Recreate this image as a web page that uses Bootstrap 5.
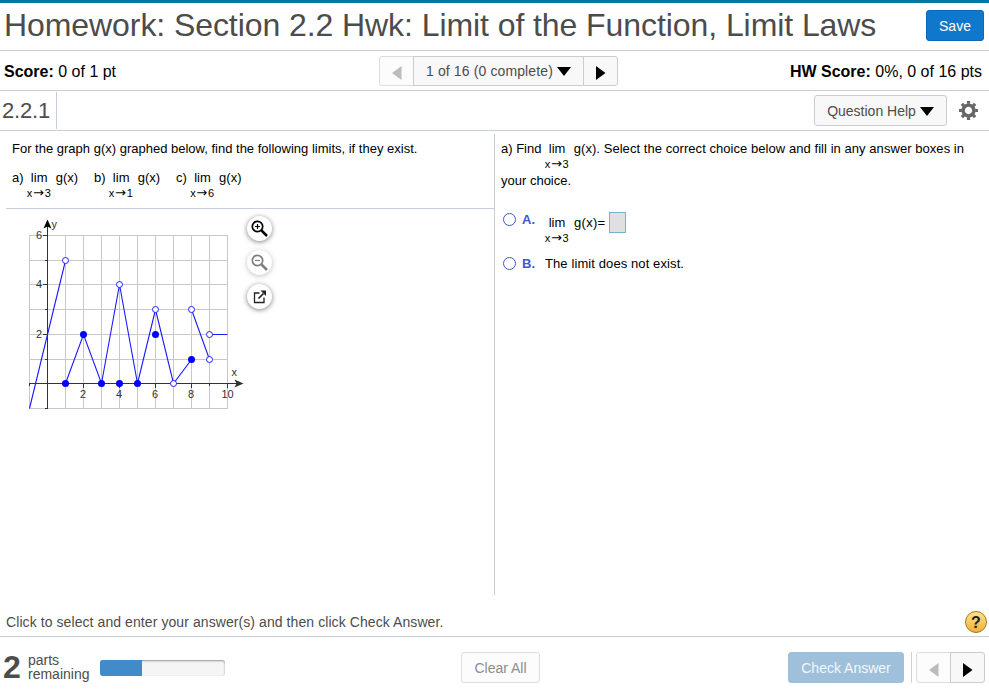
<!DOCTYPE html>
<html lang="en">
<head>
<meta charset="utf-8">
<meta name="viewport" content="width=device-width, initial-scale=1">
<title>Homework: Section 2.2 Hwk</title>
<link rel="stylesheet" href="https://cdn.jsdelivr.net/npm/bootstrap@5.3.0/dist/css/bootstrap.min.css">
<style>
:root{--rule:#c8cddb;--ink:#4c4c4c}
body{font-family:"Liberation Sans",Arial,sans-serif;font-size:14px;line-height:16px;color:var(--ink);height:696px;overflow:hidden;border-top:3px solid #007a9c}
.rule-b{border-bottom:1px solid var(--rule)}
.title-row{height:48px;padding:0 5px 2px 4px}
.title-row h1{font-size:32px;line-height:44px;font-weight:400;letter-spacing:-.075px;white-space:nowrap;color:var(--ink)}
.score-row{height:40px;font-size:16px;color:#000;padding:0 7px 0 4px;display:grid;grid-template-columns:1fr auto 1fr}
.score-text{padding-top:2px}
.pager{height:30px;margin-left:11px}
.count-btn{width:171px;letter-spacing:.12px}
.caret-down{margin:2px 0 0 4px}
.num-row{height:40px}
.num{font-size:22px;line-height:32px;width:57px;height:37px;padding:3px 0 0 2px;letter-spacing:-.2px;border-right:1px solid var(--rule)}
.btn{--bs-btn-font-size:14px;--bs-btn-line-height:16px;--bs-btn-border-radius:3px;--bs-btn-padding-y:0;--bs-btn-padding-x:12px;white-space:nowrap;display:inline-flex;align-items:center;justify-content:center}
.btn-grey{--bs-btn-bg:#f8f8f8;--bs-btn-border-color:#ccc;--bs-btn-color:#4c4c4c;--bs-btn-disabled-bg:#fcfcfc;--bs-btn-disabled-border-color:#ddd;--bs-btn-disabled-color:#8c8c8c;--bs-btn-disabled-opacity:1}
.btn-save{--bs-btn-bg:#0f77cc;--bs-btn-border-color:#0a6ab8;--bs-btn-color:#fff;width:58px;height:31px}
.btn-answer{--bs-btn-disabled-bg:#9fc0db;--bs-btn-disabled-border-color:#9fc0db;--bs-btn-disabled-color:#f3f7fa;--bs-btn-disabled-opacity:1;width:116px;height:31px;padding:0}
.help-btn{width:133px;height:31px}
.gear{margin:0 11px 1px 12px}
.arrow-btn{width:35px;padding:0}
.work{height:464px;padding-top:3px;font-size:13px;color:#000}
.left-pane{width:495px;border-right:1px solid var(--rule);padding-left:6px}
.question{height:75px;padding:7px 0 0 6px;border-bottom:1px solid var(--rule)}
.lims{padding-top:13px}
.lim-item{width:82px;white-space:nowrap}
.lim-op{display:inline-flex;flex-direction:column;align-items:center;line-height:16px;width:26px;margin-left:-1px;vertical-align:baseline}
.under{font-size:11px;line-height:15px;height:15px;letter-spacing:.7px;white-space:nowrap}
.to{font-family:"DejaVu Sans",sans-serif;font-size:13px;line-height:1}
.right-pane{padding:7px 0 0 6px}
.ask-text{letter-spacing:.055px}
.ask2{padding-top:1px}
.opt-a{margin-top:23px}
.opt-b{margin-top:13px}
.choice-mark{color:#3e58cf;font-weight:700;width:22px}
.ring{width:13px;height:13px;border:1px solid #3e58cf;border-radius:50%;margin:1px 6px 0 2px}
.opt-math{height:31px;padding:3px 0 0 1px}
.opt-math .gx{margin-left:4px;letter-spacing:.3px}
.opt-b .none-text{letter-spacing:.1px;padding-left:1px}
.answer{width:17px;height:21px;background:#e0e0e0;border:1px solid #74b5c9;margin:-3px 0 0 4px}
.tools{gap:9px;padding-top:7px}
.round-btn{width:25px;height:25px;border-radius:50%;background:#fff;box-shadow:0 1px 5px rgba(0,0,0,.5);padding:0;border:0;display:flex;align-items:center;justify-content:center}
.round-btn.faded{opacity:.5}
.hint-row{height:42px;padding:12px 1px 0 6px}
.hint{letter-spacing:.08px}
.foot{height:59px;padding:0 4px 0 3px}
.foot .btn,.foot .vr,.foot .progress{margin-top:2px}
.big-num{font-size:32px;line-height:32px;font-weight:700;width:25px}
.parts{line-height:14px;width:72px}
.progress{--bs-progress-height:16px;--bs-progress-bg:#f5f5f5;--bs-progress-border-radius:3px;--bs-progress-bar-bg:#428bca;width:125px;box-shadow:inset 0 1px 2px rgba(0,0,0,.4)}
.clear-btn{width:79px;height:31px;margin-left:236px}
.foot .vr{height:31px;align-self:center;margin-left:7px;margin-right:4px}
.foot .btn-group{height:33px}
svg{display:block;flex:none}
</style>
<script src="https://cdn.jsdelivr.net/npm/bootstrap@5.3.0/dist/js/bootstrap.bundle.min.js"></script>
</head>
<body>
<header class="title-row rule-b d-flex align-items-center justify-content-between">
  <h1 class="m-0 align-self-start">Homework: Section 2.2 Hwk: Limit of the Function, Limit Laws</h1>
  <button class="btn btn-save">Save</button>
</header>

<div class="score-row rule-b align-items-center">
  <div class="score-text"><b>Score:</b> 0 of 1 pt</div>
  <div class="btn-group pager">
    <button class="btn btn-grey arrow-btn" disabled aria-label="Previous"><svg class="mt-1" width="10" height="14"><path d="M9.5 0v14L0 7z" fill="#bbbcc0"/></svg></button>
    <button class="btn btn-grey count-btn">1 of 16 (0 complete)<svg class="caret-down" width="14" height="9"><path d="M0 0h14L7 9z" fill="#000"/></svg></button>
    <button class="btn btn-grey arrow-btn" aria-label="Next"><svg class="mt-1" width="10" height="14"><path d="M0 0v14l9.5-7z" fill="#000"/></svg></button>
  </div>
  <div class="score-text text-end"><b>HW Score:</b> 0%, 0 of 16 pts</div>
</div>

<div class="num-row rule-b d-flex align-items-center">
  <div class="num">2.2.1</div>
  <button class="btn btn-grey ms-auto help-btn">Question Help<svg class="caret-down" width="14" height="9"><path d="M0 0h14L7 9z" fill="#000"/></svg></button>
  <svg class="gear" width="19" height="19" viewBox="-10 -10 20 20" fill="none" stroke="#666">
    <circle r="5.7" stroke-width="3.6"/>
    <path d="M0-10v3M0 10V7M-10 0h3M10 0H7M-7-7l2 2M7 7 5 5M-7 7l2-2M7-7 5-5" stroke-width="3.4"/>
  </svg>
</div>

<main class="work d-flex">
  <section class="left-pane flex-shrink-0">
    <div class="question">
      <div class="text-nowrap">For the graph g(x) graphed below, find the following limits, if they exist.</div>
      <div class="lims d-flex align-items-baseline">
        <div class="lim-item">a) <span class="lim-op"><span>lim</span><span class="under">x<span class="to">→</span>3</span></span> <span>g(x)</span></div>
        <div class="lim-item">b) <span class="lim-op"><span>lim</span><span class="under">x<span class="to">→</span>1</span></span> <span>g(x)</span></div>
        <div class="lim-item">c) <span class="lim-op"><span>lim</span><span class="under">x<span class="to">→</span>6</span></span> <span>g(x)</span></div>
      </div>
    </div>
    <div class="d-flex">
      <svg width="241" height="204" viewBox="6 209 241 204" font-family="Liberation Sans, Arial, sans-serif" font-size="11" fill="#333">
        <path stroke="#c8c8c8" fill="none" d="M29.5 235v174M65.5 235v174M83.5 235v174M101.5 235v174M119.5 235v174M137.5 235v174M155.5 235v174M173.5 235v174M191.5 235v174M209.5 235v174M227.5 235v174M29 235.5h199M29 260.5h199M29 284.5h199M29 309.5h199M29 334.5h199M29 359.5h199M29 408.5h199"/>
        <path stroke="#333" fill="none" d="M29 383.5h208M47.5 409V226M43 235.5h5M45 260.5h3M43 284.5h5M45 309.5h3M43 334.5h5M45 359.5h3M45 408.5h3M29.5 383v3M65.5 383v3M83.5 383v5M101.5 383v3M119.5 383v5M137.5 383v3M155.5 383v5M173.5 383v3M191.5 383v5M209.5 383v3M227.5 383v5"/>
        <path d="M47.5 219.500l4 9-4-2-4 2z" fill="#000"/>
        <path d="M243.500 383.500l-9 4 2-4-2-4z"/>
        <g text-anchor="middle"><text x="83" y="398">2</text><text x="119" y="398">4</text><text x="155" y="398">6</text><text x="191" y="398">8</text><text x="227.500" y="398">10</text><text x="39" y="239">6</text><text x="39" y="288">4</text><text x="39" y="338">2</text></g>
        <text x="51.500" y="228">y</text><text x="231.500" y="376">x</text>
        <path stroke="#1a1aff" stroke-width="1.1" fill="none" d="M29.5 408.5l36-148M65.5 383.5l18-49 18 49 18-99 18 99 18-74 18 74 18-24M191.5 309.5l18 50M209.5 334.5h18"/>
        <g fill="#00f"><circle cx="65.500" cy="383.500" r="3.500"/><circle cx="83.500" cy="334.500" r="3.500"/><circle cx="101.500" cy="383.500" r="3.500"/><circle cx="119.500" cy="383.500" r="3.500"/><circle cx="137.500" cy="383.500" r="3.500"/><circle cx="155.500" cy="334.500" r="3.500"/><circle cx="191.500" cy="359.500" r="3.500"/></g>
        <g fill="#fff" stroke="#2020ff"><circle cx="65.500" cy="260.500" r="3"/><circle cx="119.500" cy="284.500" r="3"/><circle cx="155.500" cy="309.500" r="3"/><circle cx="173.500" cy="383.500" r="3"/><circle cx="191.500" cy="309.500" r="3"/><circle cx="209.500" cy="334.500" r="3"/><circle cx="209.500" cy="359.500" r="3"/></g>
      </svg>
      <div class="tools d-flex flex-column">
        <button class="round-btn" aria-label="Zoom in"><svg width="17" height="17" fill="none" stroke="#000"><circle cx="6.500" cy="6.500" r="5.200" stroke-width="1.700"/><path d="M10.500 10.500l5.500 5.500" stroke-width="2.500"/><path d="M4 6.500h5M6.500 4v5" stroke-width="1.200"/></svg></button>
        <button class="round-btn faded" aria-label="Zoom out"><svg width="17" height="17" fill="none" stroke="#000"><circle cx="6.500" cy="6.500" r="5.200" stroke-width="1.700"/><path d="M10.500 10.500l5.500 5.500" stroke-width="2.500"/><path d="M4 6.500h5" stroke-width="1.200"/></svg></button>
        <button class="round-btn" aria-label="Open in new window"><svg width="14" height="14" fill="none" stroke="#222"><path d="M6.500 3H1.500v9.500H11V7.500" stroke-width="1.300"/><path d="M5.500 8.500l5-5" stroke-width="1.700"/><path d="M7.500.5H13V6z" fill="#222" stroke="none"/></svg></button>
      </div>
    </div>
  </section>
  <section class="right-pane">
    <div class="text-nowrap"><span>a) Find</span> <span class="lim-op"><span>lim</span><span class="under">x<span class="to">→</span>3</span></span> <span class="ask-text">g(x). Select the correct choice below and fill in any answer boxes in</span></div>
    <div class="ask2">your choice.</div>
    <div class="d-flex opt-a">
      <span class="ring"></span><span class="choice-mark">A.</span>
      <div class="opt-math d-flex"><span class="lim-op"><span>lim</span><span class="under">x<span class="to">→</span>3</span></span><span class="gx">g(x)=</span><span class="answer"></span></div>
    </div>
    <div class="d-flex opt-b">
      <span class="ring"></span><span class="choice-mark">B.</span><span class="none-text">The limit does not exist.</span>
    </div>
  </section>
</main>

<div class="hint-row rule-b d-flex align-items-center justify-content-between">
  <span class="hint">Click to select and enter your answer(s) and then click Check Answer.</span>
  <svg width="24" height="24"><defs><linearGradient id="amber" x2="0" y2="1"><stop stop-color="#ffe58c"/><stop offset="1" stop-color="#f0ae3a"/></linearGradient></defs><circle cx="12" cy="12" r="10.500" fill="url(#amber)" stroke="#a8791e"/><text x="12" y="17.500" text-anchor="middle" font-size="16" font-weight="700" fill="#222">?</text></svg>
</div>
<footer class="foot d-flex align-items-center">
  <span class="big-num">2</span>
  <span class="parts">parts<br>remaining</span>
  <div class="progress"><div class="progress-bar" style="width:33.6%"></div></div>
  <button class="btn btn-grey clear-btn" disabled>Clear All</button>
  <button class="btn btn-answer ms-auto" disabled>Check Answer</button>
  <div class="vr"></div>
  <div class="btn-group">
    <button class="btn btn-grey arrow-btn" disabled aria-label="Previous"><svg class="mt-1" width="10" height="14"><path d="M9.5 0v14L0 7z" fill="#bbbcc0"/></svg></button>
    <button class="btn btn-grey arrow-btn" aria-label="Next"><svg class="mt-1" width="10" height="14"><path d="M0 0v14l9.500-7z" fill="#000"/></svg></button>
  </div>
</footer>
</body>
</html>
